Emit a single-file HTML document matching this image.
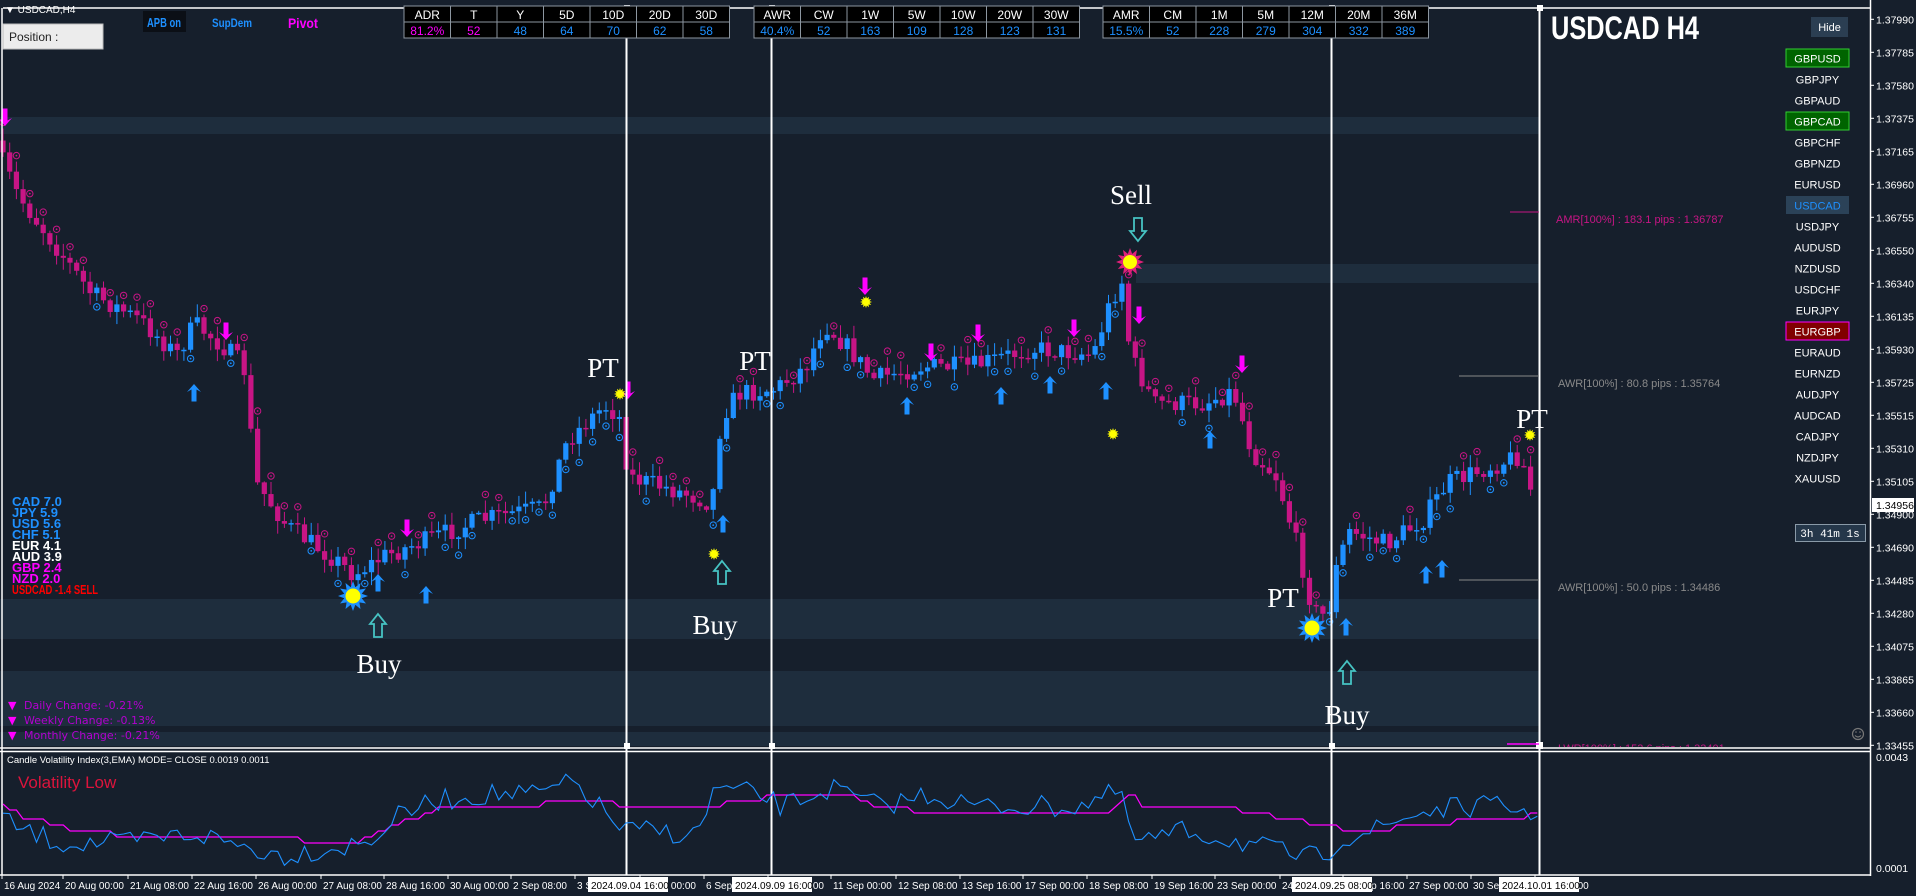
<!DOCTYPE html>
<html><head><meta charset="utf-8">
<style>
html,body{margin:0;padding:0;background:#161f2c;width:1916px;height:896px;overflow:hidden}
svg{display:block}
</style></head>
<body>
<svg id="s" width="1916" height="896" viewBox="0 0 1916 896" xmlns="http://www.w3.org/2000/svg" font-family="Liberation Sans, sans-serif">
<rect width="1916" height="896" fill="#161f2c"/>
<g fill="#1e2d3d">
<rect x="0" y="117" width="1539" height="17"/>
<rect x="1136" y="264" width="403" height="19"/>
<rect x="0" y="599" width="1539" height="40"/>
<rect x="0" y="671" width="1539" height="55"/>
<rect x="0" y="732" width="1539" height="14"/>
</g>
<g id="candles"></g>
<g id="sigs"></g>
<g stroke="#fff" fill="none">
<line x1="3" y1="8" x2="1870" y2="8" stroke-width="1.5"/>
<line x1="2" y1="8" x2="2" y2="875" stroke-width="1.5"/>
<line x1="1870.5" y1="0" x2="1870.5" y2="876" stroke-width="1.5"/>
<line x1="0" y1="748" x2="1870" y2="748" stroke-width="1.5"/>
<line x1="0" y1="751.5" x2="1870" y2="751.5" stroke-width="1.5"/>
<line x1="0" y1="875" x2="1870" y2="875" stroke-width="1.5"/>
<line x1="626.5" y1="8" x2="626.5" y2="875" stroke-width="2"/>
<line x1="771.5" y1="8" x2="771.5" y2="875" stroke-width="2"/>
<line x1="1331.5" y1="8" x2="1331.5" y2="875" stroke-width="2"/>
<line x1="1539.5" y1="8" x2="1539.5" y2="875" stroke-width="2"/>
</g>
<g fill="#fff"><rect x="624" y="5" width="6" height="6"/><rect x="769" y="5" width="6" height="6"/><rect x="1329" y="5" width="6" height="6"/><rect x="1537" y="5" width="6" height="6"/>
<rect x="624" y="743" width="6" height="6"/><rect x="769" y="743" width="6" height="6"/><rect x="1329" y="743" width="6" height="6"/><rect x="1536" y="742" width="7" height="7"/></g>

<text x="5" y="13" fill="#fff" font-size="10">▼ USDCAD,H4</text>
<rect x="3" y="24" width="100" height="25" fill="#ececec" stroke="#bbb"/>
<text x="9" y="41" fill="#222" font-size="12">Position :</text>
<rect x="143" y="11" width="43" height="21" fill="#0b0f16"/>
<text x="147" y="27" fill="#1e90ff" font-size="13" font-weight="bold" style="font-family:'Liberation Sans Narrow','Liberation Sans',sans-serif" textLength="34" lengthAdjust="spacingAndGlyphs">APB on</text>
<text x="212" y="27" fill="#1e90ff" font-size="12" font-weight="bold" style="font-family:'Liberation Sans Narrow','Liberation Sans',sans-serif" textLength="40" lengthAdjust="spacingAndGlyphs">SupDem</text>
<text x="288" y="28" fill="#ff00ff" font-size="14" font-weight="bold" style="font-family:'Liberation Sans Narrow','Liberation Sans',sans-serif" textLength="30" lengthAdjust="spacingAndGlyphs">Pivot</text>

<g id="tables"></g>

<text x="1551" y="39" fill="#fff" font-size="32" font-weight="bold" style="font-family:'Liberation Sans Narrow','Liberation Sans',sans-serif" textLength="148" lengthAdjust="spacingAndGlyphs">USDCAD H4</text>
<rect x="1811" y="17" width="37" height="20" fill="#2b3e52"/>
<text x="1829.5" y="31" fill="#fff" font-size="11" text-anchor="middle">Hide</text>
<g id="syms"></g>

<line x1="1510" y1="212" x2="1539" y2="212" stroke="#c71585"/>
<text x="1556" y="223" fill="#c71585" font-size="11">AMR[100%] : 183.1 pips : 1.36787</text>
<line x1="1459" y1="376" x2="1539" y2="376" stroke="#888"/>
<text x="1558" y="387" fill="#8a8a8a" font-size="11">AWR[100%] : 80.8 pips : 1.35764</text>
<line x1="1459" y1="580" x2="1539" y2="580" stroke="#888"/>
<text x="1558" y="591" fill="#8a8a8a" font-size="11">AWR[100%] : 50.0 pips : 1.34486</text>
<line x1="1507" y1="744" x2="1539" y2="744" stroke="#ff00ff" stroke-width="1.5"/>
<clipPath id="cl"><rect x="1540" y="730" width="300" height="17"/></clipPath>
<text x="1558" y="752" fill="#c71585" font-size="11" clip-path="url(#cl)">LWR[100%] : 153.6 pips : 1.33401</text>

<rect x="1795.5" y="524.5" width="70" height="17" fill="#25374a" stroke="#8a9aa8"/>
<text x="1830" y="537" fill="#fff" font-size="11" style="font-family:'Liberation Mono',monospace" text-anchor="middle">3h 41m 1s</text>
<g stroke="#777" fill="none" stroke-width="1.2"><circle cx="1858" cy="734" r="5.5"/><path d="M1855,735.5 Q1858,738.5 1861,735.5"/></g>
<circle cx="1856" cy="732" r="0.8" fill="#777"/><circle cx="1860" cy="732" r="0.8" fill="#777"/>

<g id="axis"></g>
<rect x="1872" y="498" width="42" height="14" fill="#fff"/>
<text x="1876" y="509" fill="#000" font-size="10.5">1.34956</text>
<text x="1876" y="761" fill="#fff" font-size="10.5">0.0043</text>
<text x="1876" y="872" fill="#fff" font-size="10.5">0.0001</text>

<g font-size="13" font-weight="bold" style="font-family:'Liberation Sans Narrow','Liberation Sans',sans-serif">
<text x="12" y="506" fill="#1e90ff">CAD  7.0</text>
<text x="12" y="517" fill="#1e90ff">JPY  5.9</text>
<text x="12" y="528" fill="#1e90ff">USD   5.6</text>
<text x="12" y="539" fill="#1e90ff">CHF  5.1</text>
<text x="12" y="550" fill="#fff">EUR  4.1</text>
<text x="12" y="561" fill="#fff">AUD   3.9</text>
<text x="12" y="572" fill="#ff00ff">GBP  2.4</text>
<text x="12" y="583" fill="#ff00ff">NZD  2.0</text>
<text x="12" y="594" fill="#ff0000" textLength="86" lengthAdjust="spacingAndGlyphs">USDCAD -1.4 SELL</text>
</g>
<g font-size="11" fill="#b400d0" style="font-family:'DejaVu Sans',sans-serif">
<text x="8" y="709" fill="#ff00ff">▼</text><text x="24" y="709">Daily Change: -0.21%</text>
<text x="8" y="724" fill="#ff00ff">▼</text><text x="24" y="724">Weekly Change: -0.13%</text>
<text x="8" y="739" fill="#ff00ff">▼</text><text x="24" y="739">Monthly Change: -0.21%</text>
</g>

<text x="7" y="763" fill="#fff" font-size="9.5">Candle Volatility Index(3,EMA) MODE= CLOSE 0.0019 0.0011</text>
<text x="18" y="788" fill="#dc143c" font-size="17">Volatility Low</text>
<g id="sub"></g>
<g id="time"></g>
</svg>
<script>
(function(){
var NS="http://www.w3.org/2000/svg";
function el(p,t,a,txt){var e=document.createElementNS(NS,t);for(var k in a)e.setAttribute(k,a[k]);if(txt!=null)e.textContent=txt;p.appendChild(e);return e;}
var seed=7;function rnd(){seed=(seed*16807)%2147483647;return (seed-1)/2147483646;}
var S=1.222;
function interp(kp,x){for(var i=1;i<kp.length;i++){if(x<=kp[i][0]){var a=kp[i-1],b=kp[i];return a[1]+(b[1]-a[1])*(x-a[0])/(b[0]-a[0]);}}return kp[kp.length-1][1];}
var kp=[[0,115],[20,160],[50,200],[80,240],[120,262],[150,290],[165,265],[190,285],[205,300],[215,395],[240,430],[280,458],[295,470],[320,455],[360,440],[400,425],[450,415],[470,360],[500,332],[512,340],[520,390],[570,405],[588,412],[596,340],[610,322],[640,318],[665,300],[680,265],[700,285],[720,310],[760,300],[800,300],[850,285],[900,290],[915,245],[925,228],[930,290],[950,330],[990,330],[1015,320],[1030,370],[1050,390],[1068,450],[1080,500],[1092,505],[1100,460],[1110,435],[1140,445],[1170,425],[1190,395],[1230,380],[1250,372],[1257,400]];
var g=document.getElementById('candles');
var step=6.7,prev=interp(kp,0)*S;
for(var i=0;i<230;i++){
 var x=3+i*step;if(x>1536)break;
 var base=interp(kp,(x+step)/S)*S;
 var c=base+(rnd()-0.5)*20;
 var o=prev;prev=c;
 var top=Math.min(o,c),bot=Math.max(o,c);
 var hi=top-rnd()*12-1,lo=bot+rnd()*12+1;
 var bull=c<o;var col=bull?'#1e90ff':'#c71585';
 el(g,'line',{x1:x,y1:hi,x2:x,y2:lo,stroke:col,'stroke-width':1});
 el(g,'rect',{x:x-2.6,y:top,width:5.2,height:Math.max(1.5,bot-top),fill:col});
 if(i%2==0){var cy=bull?lo+6:hi-6;el(g,'circle',{cx:x,cy:cy,r:3.2,fill:'none',stroke:col,'stroke-width':1});el(g,'circle',{cx:x,cy:cy,r:0.9,fill:col});}
}
var s=document.getElementById('sigs');
function up(x,y,c){el(s,'path',{d:'M'+x+','+(y-10)+' l7,8 l-4.5,-2.5 l0,12 l-5,0 l0,-12 l-4.5,2.5 z',fill:c||'#1e90ff'});}
function dn(x,y){el(s,'path',{d:'M'+x+','+(y+10)+' l7,-8 l-4.5,2.5 l0,-12 l-5,0 l0,12 l-4.5,-2.5 z',fill:'#ff00ff'});}
function oup(x,y){el(s,'path',{d:'M'+x+','+(y-12)+' l8,10 l-4,0 l0,13 l-8,0 l0,-13 l-4,0 z',fill:'none',stroke:'#46c3c3','stroke-width':1.8});}
function odn(x,y){el(s,'path',{d:'M'+x+','+(y+12)+' l8,-10 l-4,0 l0,-13 l-8,0 l0,13 l-4,0 z',fill:'none',stroke:'#46c3c3','stroke-width':1.8});}
function star(x,y,r,outer,inner){var p='';for(var k=0;k<24;k++){var a=k*Math.PI/12,rr=k%2?r*0.6:r;p+=(k?'L':'M')+(x+rr*Math.cos(a)).toFixed(1)+','+(y+rr*Math.sin(a)).toFixed(1);}el(s,'path',{d:p+'Z',fill:outer});el(s,'circle',{cx:x,cy:y,r:r*0.5,fill:inner});}
function dot(x,y){star(x,y,6,'#ffff00','#ffff00');}
[[194,394],[426,596],[907,407],[1001,397],[1050,386],[1106,392],[1210,441],[1426,576],[1442,570],[1346,628],[723,525],[378,584]].forEach(function(a){up(a[0],a[1]);});
[[226,330],[407,527],[865,285],[931,351],[978,332],[1074,327],[1242,363],[1139,314],[5,116],[628,389]].forEach(function(a){dn(a[0],a[1]);});
oup(378,626);oup(722,573);oup(1347,673);odn(1138,229);
star(353,596,15,'#1e90ff','#ffff00');star(1312,628,15,'#1e90ff','#ffff00');star(1130,262,14,'#e0207a','#ffff00');
[[620,394],[714,554],[866,302],[1113,434],[1530,435]].forEach(function(a){dot(a[0],a[1]);});
function lbl(t,x,y){el(s,'text',{x:x,y:y,fill:'#fff','font-size':27,'text-anchor':'middle',style:"font-family:'Liberation Serif',serif"},t);}
lbl('PT',603,377);lbl('PT',755,370);lbl('Sell',1131,204);lbl('Buy',379,673);lbl('Buy',715,634);lbl('PT',1283,607);lbl('Buy',1347,724);lbl('PT',1532,428);
var tg=document.getElementById('tables');
function table(x0,h,v,firstMag,secondMag){var w=46.5;for(var j=0;j<7;j++){var x=x0+j*w;el(tg,'rect',{x:x,y:6,width:w,height:32,fill:'#000',stroke:'#8c96a0','stroke-width':1});el(tg,'line',{x1:x,y1:22,x2:x+w,y2:22,stroke:'#8c96a0'});
el(tg,'text',{x:x+w/2,y:19,fill:'#fff','font-size':12,'text-anchor':'middle'},h[j]);
var col=(j==0&&firstMag)||(j==1&&secondMag)?'#ff00ff':'#1e90ff';el(tg,'text',{x:x+w/2,y:35,fill:col,'font-size':12,'text-anchor':'middle'},v[j]);}}
table(404,['ADR','T','Y','5D','10D','20D','30D'],['81.2%','52','48','64','70','62','58'],true,true);
table(754,['AWR','CW','1W','5W','10W','20W','30W'],['40.4%','52','163','109','128','123','131'],false,false);
table(1103,['AMR','CM','1M','5M','12M','20M','36M'],['15.5%','52','228','279','304','332','389'],false,false);
var sg=document.getElementById('syms');
['GBPUSD','GBPJPY','GBPAUD','GBPCAD','GBPCHF','GBPNZD','EURUSD','USDCAD','USDJPY','AUDUSD','NZDUSD','USDCHF','EURJPY','EURGBP','EURAUD','EURNZD','AUDJPY','AUDCAD','CADJPY','NZDJPY','XAUUSD'].forEach(function(n,k){var y=58+k*21;var col='#fff';
if(n=='GBPUSD'||n=='GBPCAD')el(sg,'rect',{x:1786,y:y-9,width:63,height:18,fill:'#006400',stroke:'#32cd32'});
if(n=='USDCAD'){el(sg,'rect',{x:1786,y:y-9,width:63,height:18,fill:'#2b4258'});col='#1e90ff';}
if(n=='EURGBP')el(sg,'rect',{x:1786,y:y-9,width:63,height:18,fill:'#800000',stroke:'#ff00ff'});
el(sg,'text',{x:1817.5,y:y+4.5,fill:col,'font-size':11,'text-anchor':'middle'},n);});
var ag=document.getElementById('axis');
['1.37990','1.37785','1.37580','1.37375','1.37165','1.36960','1.36755','1.36550','1.36340','1.36135','1.35930','1.35725','1.35515','1.35310','1.35105','1.34900','1.34690','1.34485','1.34280','1.34075','1.33865','1.33660','1.33455'].forEach(function(t,k){var y=19.3+k*33;el(ag,'line',{x1:1870,y1:y,x2:1874,y2:y,stroke:'#fff'});el(ag,'text',{x:1876,y:y+4,fill:'#fff','font-size':10.5},t);});
var sub=document.getElementById('sub');
var bk=[[5,672],[20,680],[50,690],[100,690],[130,686],[160,682],[190,690],[230,700],[300,690],[330,665],[360,655],[400,650],[440,650],[470,640],[510,680],[540,680],[570,684],[585,645],[620,650],[640,660],[680,645],[720,660],[760,650],[800,660],[850,660],[880,660],[915,648],[930,690],[970,680],[1020,690],[1060,700],[1080,702],[1100,685],[1130,678],[1160,665],[1200,660],[1230,660],[1255,665],[1259,680]];
var mk=[[5,660],[20,670],[60,680],[130,688],[170,688],[230,688],[290,690],[320,675],[360,660],[420,658],[470,655],[510,660],[540,663],[590,657],[620,655],[630,648],[690,650],[720,662],[780,667],[830,667],[905,667],[925,650],[935,660],[1000,662],[1060,672],[1100,680],[1130,678],[1175,672],[1220,670],[1259,665]];
var pb='',pm='',last=null;
for(var x=3;x<=1539;x+=6.7){var yb=interp(bk,x/S)*S+(rnd()-0.5)*22;pb+=(pb?'L':'M')+x.toFixed(1)+','+yb.toFixed(1);
var ym=Math.round(interp(mk,x/S)*S/3)*3;if(last===null){pm='M'+x+','+ym;}else{pm+='L'+x.toFixed(1)+','+(Math.abs(ym-last)<4?last:ym);}if(last===null||Math.abs(ym-last)>=4)last=ym;}
el(sub,'path',{d:pm,fill:'none',stroke:'#ff00ff','stroke-width':1.2});
el(sub,'path',{d:pb,fill:'none',stroke:'#1e90ff','stroke-width':1.1});
var tg2=document.getElementById('time');
[[4,'16 Aug 2024'],[65,'20 Aug 00:00'],[130,'21 Aug 08:00'],[194,'22 Aug 16:00'],[258,'26 Aug 00:00'],[323,'27 Aug 08:00'],[386,'28 Aug 16:00'],[450,'30 Aug 00:00'],[513,'2 Sep 08:00'],[577,'3 Sep 16:00'],[642,'5 Sep 00:00'],[706,'6 Sep 08:00'],[770,'9 Sep 16:00'],[833,'11 Sep 00:00'],[898,'12 Sep 08:00'],[962,'13 Sep 16:00'],[1025,'17 Sep 00:00'],[1089,'18 Sep 08:00'],[1154,'19 Sep 16:00'],[1217,'23 Sep 00:00'],[1282,'24 Sep 08:00'],[1345,'25 Sep 16:00'],[1409,'27 Sep 00:00'],[1473,'30 Sep 08:00'],[1537,'1 Oct 00:00']].forEach(function(a){el(tg2,'line',{x1:a[0]-2,y1:875,x2:a[0]-2,y2:879,stroke:'#fff'});el(tg2,'text',{x:a[0],y:889,fill:'#fff','font-size':10},a[1]);});
[[588,'2024.09.04 16:00'],[732,'2024.09.09 16:00'],[1292,'2024.09.25 08:00'],[1499,'2024.10.01 16:00']].forEach(function(a){el(tg2,'rect',{x:a[0],y:877,width:80,height:15,fill:'#fff'});el(tg2,'text',{x:a[0]+3,y:889,fill:'#000','font-size':10},a[1]);});
})();
</script>
</body></html>
